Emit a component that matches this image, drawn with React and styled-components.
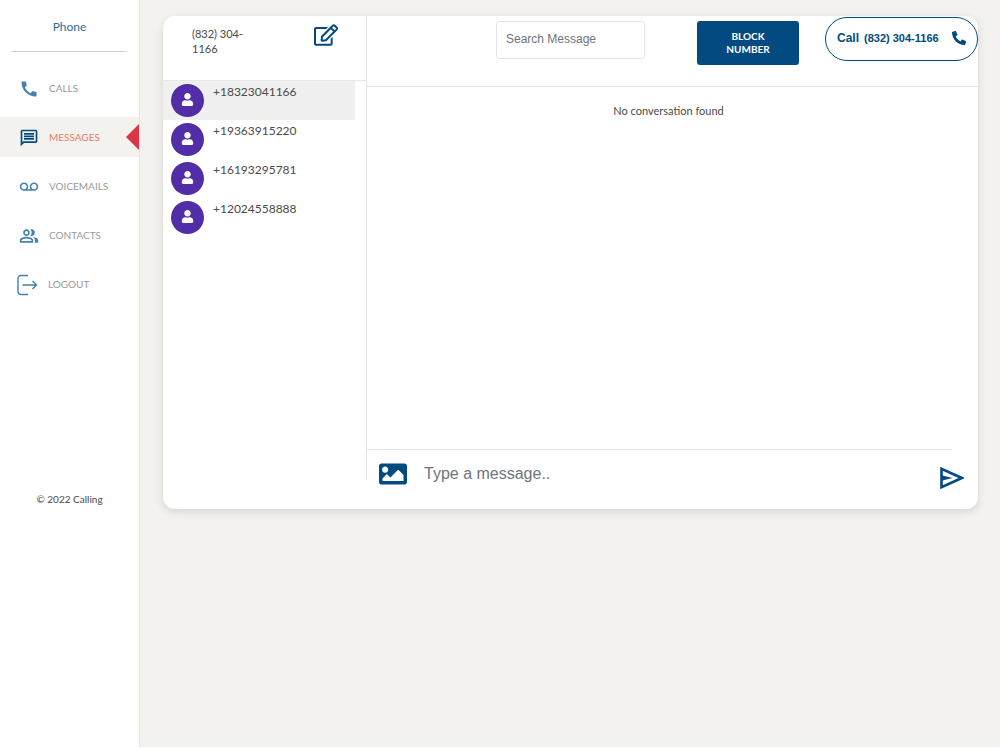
import styled, { createGlobalStyle } from "styled-components";
import { FaImage, FaPhoneAlt, FaRegEdit, FaUser } from "react-icons/fa";
import {
  MdCall,
  MdOutlineMessage,
  MdOutlinePeopleAlt,
  MdVoicemail,
} from "react-icons/md";

const GlobalStyle = createGlobalStyle`
  * {
    box-sizing: border-box;
  }
  body {
    margin: 0;
    background: #fff;
    color: #4a4a4a;
    font-family: Lato, sans-serif;
    font-size: 12px;
  }
  button, input {
    font-family: "Liberation Sans", Arial, sans-serif;
  }
`;

// bracket with an arrow leaving it to the right
const LogoutIcon = () => (
  <svg width="22" height="22" viewBox="0 0 22 22" fill="none" stroke="currentColor" strokeWidth="1.4">
    <path d="M11 1.500H4a3 3 0 0 0-3 3v13a3 3 0 0 0 3 3h7" />
    <path d="M5.500 11h14M15.500 7l4 4-4 4" />
  </svg>
);

const SendIcon = () => (
  <svg width="24" height="22" viewBox="0 0 24 22" fill="none" stroke="currentColor">
    <path d="M1.500 1.800v18.400L21.800 11z" strokeWidth="2.600" />
    <path d="M1.500 8.200l11 2.800-11 2.800z" fill="currentColor" stroke="none" />
  </svg>
);

const links = [
  { name: "CALLS", icon: <MdCall /> },
  { name: "MESSAGES", icon: <MdOutlineMessage />, active: true },
  { name: "VOICEMAILS", icon: <MdVoicemail viewBox="-1 -1 26 26" /> },
  { name: "CONTACTS", icon: <MdOutlinePeopleAlt /> },
  { name: "LOGOUT", icon: <LogoutIcon />, wide: true },
];

const contacts = ["+18323041166", "+19363915220", "+16193295781", "+12024558888"];

const App = () => {
  return (
    <>
      <GlobalStyle />
      <Page>
        <Sidebar>
          <Brand href="#">Phone</Brand>
          <Nav>
            {links.map((link) => (
              <NavItem key={link.name} href="#" $active={link.active} $wide={link.wide}>
                {link.icon}
                <span>{link.name}</span>
              </NavItem>
            ))}
          </Nav>
          <Copyright>© 2022 Calling</Copyright>
        </Sidebar>
        <Main>
          <Card>
            <Threads>
              <ThreadsHeader>
                <OwnNumber>(832) 304-1166</OwnNumber>
                <IconButton type="button" aria-label="New message">
                  <FaRegEdit size={24} />
                </IconButton>
              </ThreadsHeader>
              {contacts.map((number, index) => (
                <Thread key={number} type="button" $selected={index === 0}>
                  <Avatar>
                    <FaUser size={13} />
                  </Avatar>
                  {number}
                </Thread>
              ))}
            </Threads>
            <Conversation>
              <Toolbar>
                <Search type="text" placeholder="Search Message" aria-label="Search Message" />
                <BlockButton type="button">BLOCK NUMBER</BlockButton>
                <CallButton type="button">
                  <span>Call</span>
                  <CallNumber>(832) 304-1166</CallNumber>
                  <FaPhoneAlt size={14} />
                </CallButton>
              </Toolbar>
              <Empty>No conversation found</Empty>
              <Composer>
                <IconButton type="button" aria-label="Attach image">
                  <FaImage size={28} />
                </IconButton>
                <MessageInput type="text" placeholder="Type a message.." aria-label="Message" />
              </Composer>
              <SendButton type="button" aria-label="Send">
                <SendIcon />
              </SendButton>
            </Conversation>
          </Card>
        </Main>
      </Page>
    </>
  );
};

const Page = styled.div`
  display: flex;
  min-height: calc(100vh - 3px);
`;
const Sidebar = styled.aside`
  width: 140px;
  flex-shrink: 0;
  background: #fff;
  border-right: 1px solid #e6e5e1;
`;
const Brand = styled.a`
  display: block;
  margin: 0 12px;
  padding: 18px 0 15px;
  border-bottom: 1px solid #d0d0d0;
  color: #2f6c9c;
  font-size: 12px;
  line-height: 18px;
  text-align: center;
  text-decoration: none;
`;
const Nav = styled.nav`
  display: flex;
  flex-direction: column;
  gap: 9px;
  padding-top: 16px;
`;
const NavItem = styled.a`
  display: flex;
  align-items: center;
  gap: ${(props) => (props.$wide ? "9px" : "10px")};
  height: 40px;
  padding-left: ${(props) => (props.$wide ? "17px" : "19px")};
  position: relative;
  background: ${(props) => (props.$active ? "#f4f2ee" : "transparent")};
  color: ${(props) => (props.$active ? "#f07b63" : "#999")};
  font-size: 10px;
  line-height: 16px;
  text-decoration: none;

  svg {
    width: ${(props) => (props.$wide ? "22px" : "20px")};
    height: ${(props) => (props.$wide ? "22px" : "20px")};
    margin-top: 2px;
    color: ${(props) => (props.$active ? "#024a80" : "#4680ac")};
  }

  &::after {
    content: "";
    display: ${(props) => (props.$active ? "block" : "none")};
    position: absolute;
    right: 0;
    top: 7px;
    border: solid transparent;
    border-width: 13px 13px 13px 0;
    border-right-color: #dc3548;
  }
`;
const Copyright = styled.p`
  margin: 187px 0 0;
  font-size: 10px;
  line-height: 16px;
  text-align: center;
`;
const Main = styled.main`
  flex: 1;
  min-width: 0;
  padding: 16px 22px 16px 23px;
  background: #f4f2ee;
`;
const Card = styled.section`
  display: flex;
  align-items: flex-start;
  padding-bottom: 11px;
  background: #fff;
  border-radius: 12px;
  box-shadow: 0 3px 8px rgba(0, 0, 0, 0.12);
`;
const Threads = styled.div`
  width: 204px;
  min-height: 464px;
  flex-shrink: 0;
  border-right: 1px solid #e4e4e4;
`;
const ThreadsHeader = styled.header`
  display: flex;
  align-items: flex-start;
  justify-content: space-between;
  height: 65px;
  padding: 7px 28px 0 29px;
  border-bottom: 1px solid #e8e8e8;
`;
const OwnNumber = styled.div`
  width: 60px;
  padding-top: 3px;
  font-size: 11px;
  line-height: 15px;
`;
const IconButton = styled.button`
  display: flex;
  padding: 0;
  border: none;
  background: none;
  color: #024a80;
  cursor: pointer;
`;
const Thread = styled.button`
  display: flex;
  gap: 9px;
  width: calc(100% - 11px);
  height: 39px;
  padding: 3px 0 0 8px;
  border: none;
  background: ${(props) => (props.$selected ? "#f0f0f0" : "transparent")};
  color: #4a4a4a;
  font-family: Lato, sans-serif;
  font-size: 12px;
  line-height: 16px;
  cursor: pointer;
`;
const Avatar = styled.span`
  display: flex;
  align-items: center;
  justify-content: center;
  width: 33px;
  height: 33px;
  padding-bottom: 2px;
  border-radius: 50%;
  background: #512da8;
  color: #fff;
`;
const Conversation = styled.div`
  display: flex;
  flex-direction: column;
  flex: 1;
  min-width: 0;
  position: relative;
`;
const Toolbar = styled.header`
  display: flex;
  align-items: flex-start;
  justify-content: flex-end;
  height: 71px;
  padding-top: 1px;
  border-bottom: 1px solid #e4e4e4;
`;
const Search = styled.input`
  width: 149px;
  height: 38px;
  margin: 4px 52px 0 0;
  padding: 0 9px 2px;
  border: 1px solid #e2e4e6;
  border-radius: 3px;
  font-size: 12px;

  &::placeholder {
    color: #6c757d;
  }
`;
const BlockButton = styled.button`
  width: 102px;
  height: 44px;
  margin: 4px 26px 0 0;
  padding: 0 24px;
  border: none;
  border-radius: 3px;
  background: #024a80;
  color: #fff;
  font-family: Lato, sans-serif;
  font-size: 10px;
  font-weight: 700;
  line-height: 13px;
  cursor: pointer;
`;
const CallButton = styled.button`
  display: flex;
  align-items: center;
  width: 153px;
  height: 44px;
  padding: 0 11px 2px;
  border: 1px solid #024a80;
  border-radius: 22px;
  background: #fff;
  color: #024a80;
  font-size: 12px;
  font-weight: 700;
  white-space: nowrap;
  cursor: pointer;

  svg {
    flex-shrink: 0;
    margin-left: auto;
  }
`;
const CallNumber = styled.span`
  margin-left: 5px;
  font-size: 11px;
`;
const Empty = styled.p`
  min-height: 362px;
  margin: 0;
  padding: 16px 8px 0 0;
  font-size: 11px;
  line-height: 16px;
  text-align: center;
`;
const Composer = styled.form`
  display: flex;
  align-items: center;
  height: 49px;
  margin-right: 26px;
  padding-left: 12px;
  border-top: 1px solid #e4e4e4;
`;
const MessageInput = styled.input`
  flex: 1;
  min-width: 0;
  height: 38px;
  padding: 0 17px;
  border: none;
  outline: none;
  background: transparent;
  font-size: 16px;

  &::placeholder {
    color: #6c757d;
  }
`;
const SendButton = styled(IconButton)`
  position: absolute;
  right: 14px;
  bottom: 9px;
`;

export default App;
